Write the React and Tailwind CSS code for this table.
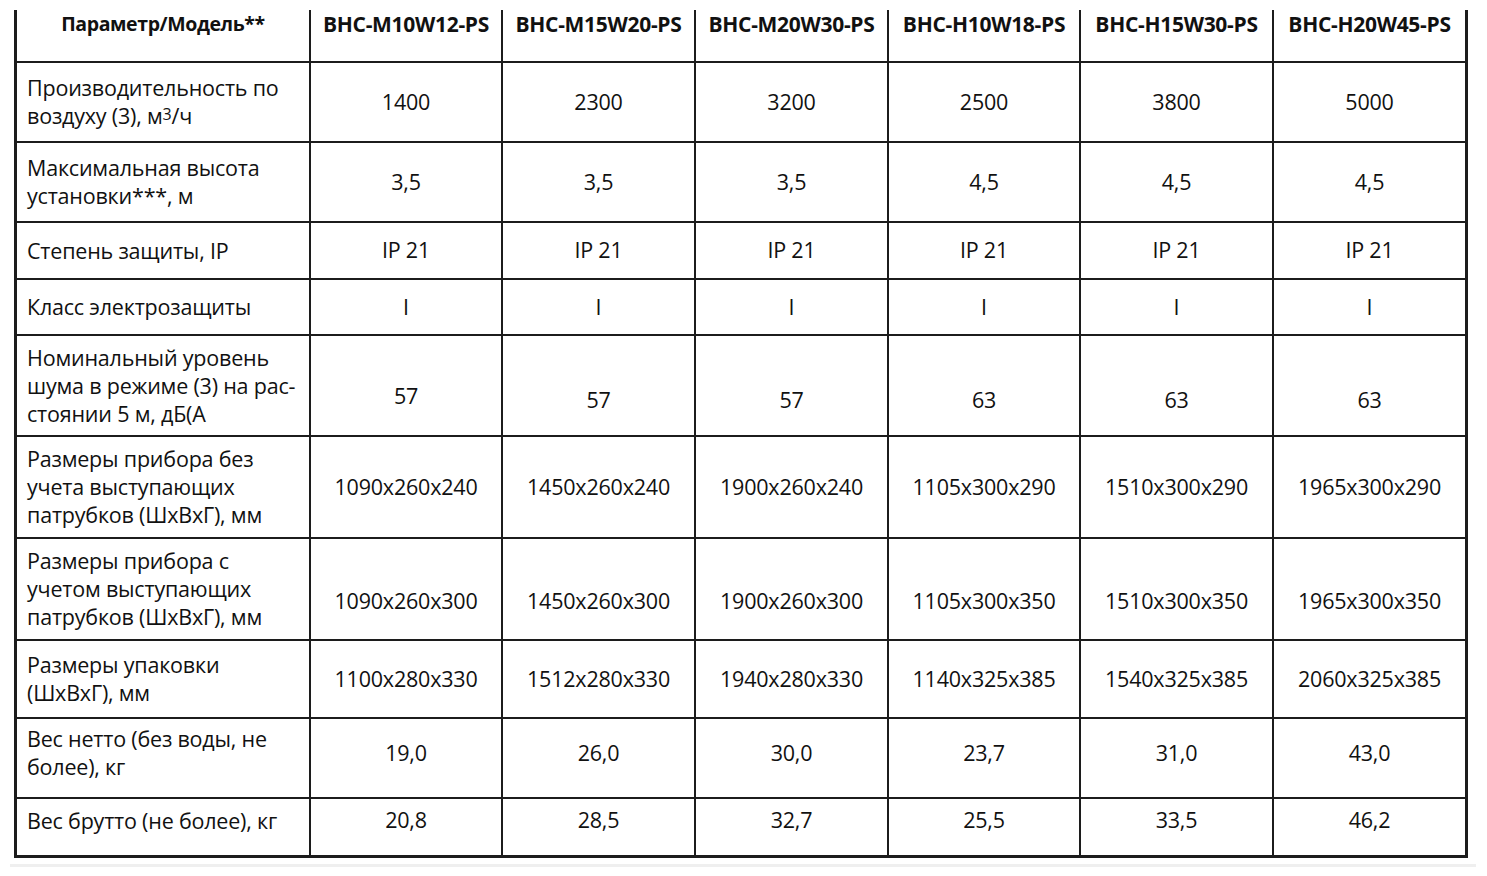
import React from 'react';

const models = ['BHC-M10W12-PS', 'BHC-M15W20-PS', 'BHC-M20W30-PS', 'BHC-H10W18-PS', 'BHC-H15W30-PS', 'BHC-H20W45-PS'];

// h = row height incl. bottom line, shift = value offset from centre
const rows = [
    { label: <>Производительность по<br />воздуху (3), м<sup className="text-[16px] relative -top-[4px] leading-none">3</sup>/ч</>, values: ['1400', '2300', '3200', '2500', '3800', '5000'], h: 'h-[80px]' },
    { label: <>Максимальная высота<br />установки***, м</>, values: ['3,5', '3,5', '3,5', '4,5', '4,5', '4,5'], h: 'h-[80px]' },
    { label: 'Степень защиты, IP', values: ['IP 21', 'IP 21', 'IP 21', 'IP 21', 'IP 21', 'IP 21'], h: 'h-[57px]' },
    { label: 'Класс электрозащиты', values: ['I', 'I', 'I', 'I', 'I', 'I'], h: 'h-[56px]' },
    { label: <>Номинальный уровень<br />шума в режиме (3) на рас-<br />стоянии 5 м, дБ(А</>, values: ['57', '57', '57', '63', '63', '63'], h: 'h-[101px]', shift: ['pt-[22px]', 'pt-[30px]', 'pt-[30px]', 'pt-[30px]', 'pt-[30px]', 'pt-[30px]'] },
    { label: <>Размеры прибора без<br />учета выступающих<br />патрубков (ШхВхГ), мм</>, values: ['1090x260x240', '1450x260x240', '1900x260x240', '1105x300x290', '1510x300x290', '1965x300x290'], h: 'h-[102px]' },
    { label: <>Размеры прибора с<br />учетом выступающих<br />патрубков (ШхВхГ), мм</>, values: ['1090x260x300', '1450x260x300', '1900x260x300', '1105x300x350', '1510x300x350', '1965x300x350'], h: 'h-[102px]', shift: Array(6).fill('pt-[24px]') },
    { label: <>Размеры упаковки<br />(ШхВхГ), мм</>, values: ['1100x280x330', '1512x280x330', '1940x280x330', '1140x325x385', '1540x325x385', '2060x325x385'], h: 'h-[78px]' },
    { label: <>Вес нетто (без воды, не<br />более), кг</>, values: ['19,0', '26,0', '30,0', '23,7', '31,0', '43,0'], h: 'h-[80px]', labelPad: 'pb-[10px]', shift: Array(6).fill('pb-[10px]') },
    { label: 'Вес брутто (не более), кг', values: ['20,8', '28,5', '32,7', '25,5', '33,5', '46,2'], h: 'h-[56px]', labelPad: 'pb-[13px]', shift: Array(6).fill('pb-[13px]') },
];

const App = () => {
    return (
        <div className="w-[1487px] h-[876px] bg-white pt-[10px] text-[#111111]" style={{ fontFamily: '"Open Sans", "Noto Sans", sans-serif' }}>
            <div className="ml-[14px] w-[1454px] border-l-[3px] border-r-[3px] border-b-[3px] border-[#1c1c1c] grid grid-cols-[294px_192px_193px_193px_192px_193px_191px]">
                {/* Header */}
                <div className="h-[53px] border-r-2 border-b-2 border-[#1c1c1c] flex justify-center font-bold text-[19.5px] leading-[28px] tracking-[-0.4px]">
                    Параметр/Модель**
                </div>
                {models.map((m, i) => (
                    <div key={m} className={`h-[53px] border-b-2 border-[#1c1c1c] flex justify-center font-bold text-[21px] leading-[28px] tracking-[-0.3px] ${i < 5 ? 'border-r-2' : ''}`}>
                        {m}
                    </div>
                ))}

                {/* Body */}
                {rows.map((r, ri) => (
                    <React.Fragment key={ri}>
                        <div className={`${r.h} ${ri < rows.length - 1 ? 'border-b-2' : ''} border-r-2 border-[#1c1c1c] flex items-center pl-[10px] text-[21.5px] leading-[28px] tracking-[-0.2px] whitespace-nowrap ${r.labelPad || ''}`}>
                            <div>{r.label}</div>
                        </div>
                        {r.values.map((v, vi) => (
                            <div key={vi} className={`${r.h} ${ri < rows.length - 1 ? 'border-b-2' : ''} ${vi < 5 ? 'border-r-2' : ''} border-[#1c1c1c] flex items-center justify-center text-[21.5px] tracking-[-0.2px] ${r.shift ? r.shift[vi] : ''}`}>
                                {v}
                            </div>
                        ))}
                    </React.Fragment>
                ))}
            </div>
            <div className="mt-[6px] mx-[10px] w-[1466px] h-[3px] bg-[#efefef]" />
        </div>
    );
};

export default App;
